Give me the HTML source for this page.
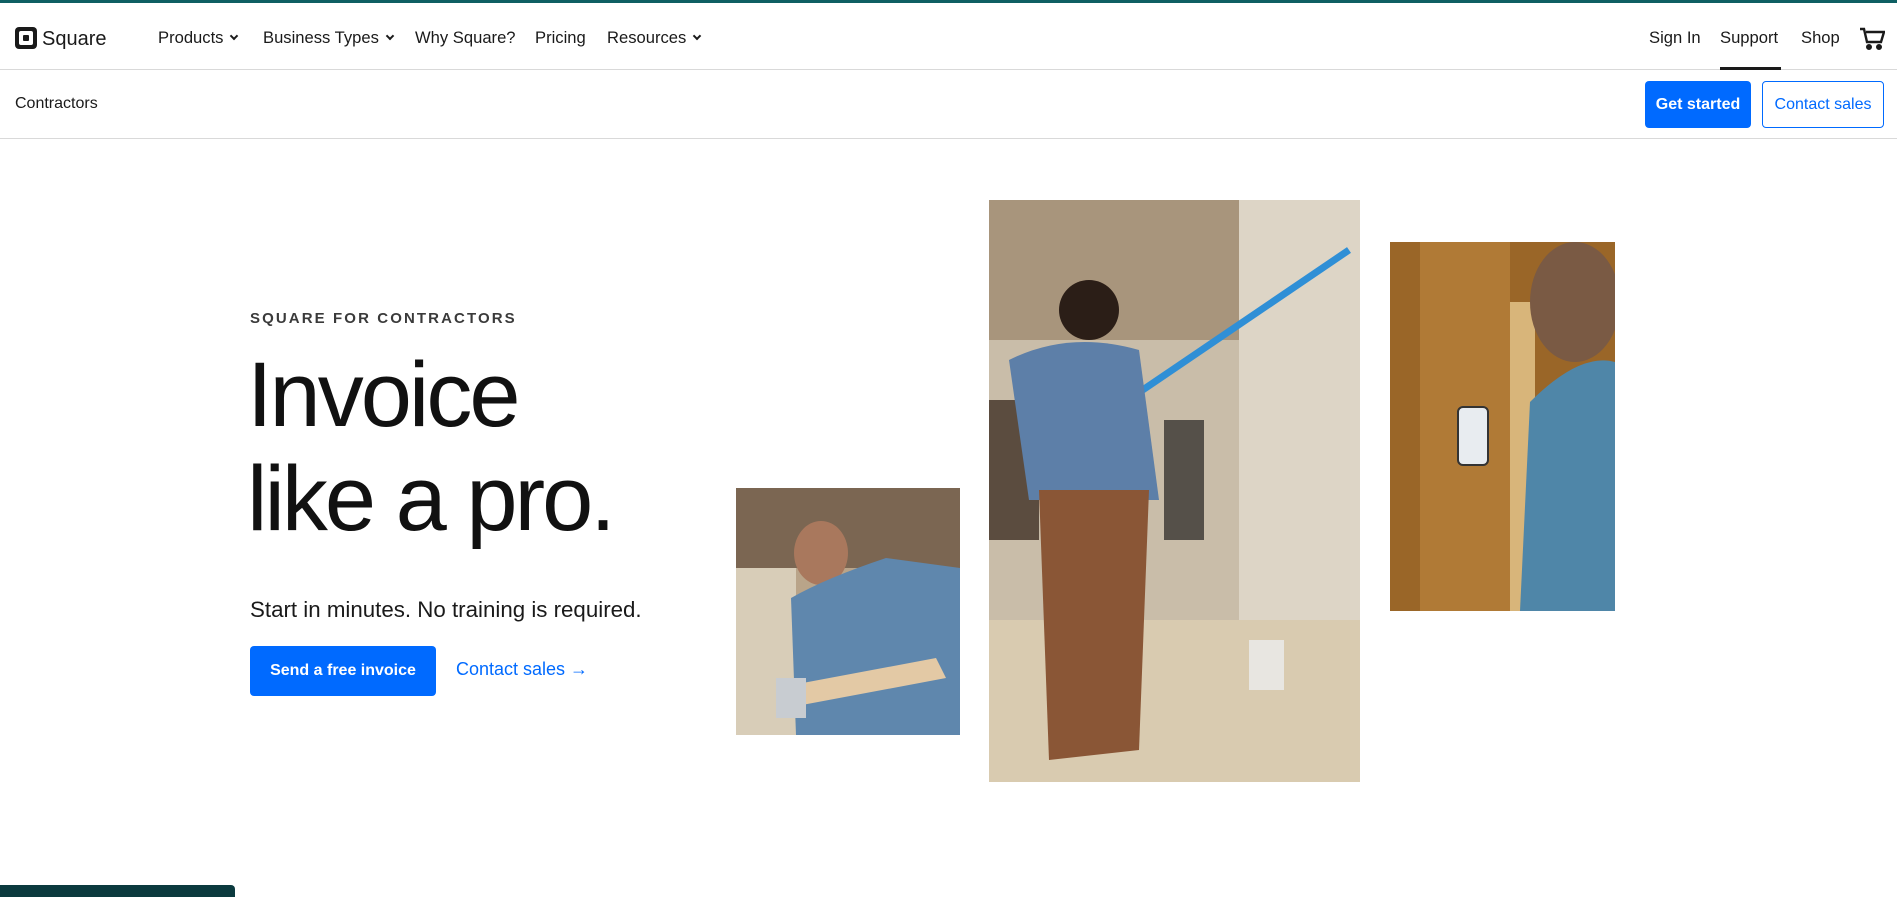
<!DOCTYPE html>
<html><head><meta charset="utf-8"><style>
*{margin:0;padding:0;box-sizing:border-box}
body{width:1897px;height:894px;overflow:hidden;background:#fff;font-family:"Liberation Sans",Arial,sans-serif;color:#1a1a1a;position:relative}
.top{position:absolute;left:0;top:0;width:100%;height:3px;background:#0e5f63}
.nav{position:absolute;top:3px;left:0;width:100%;height:67px;border-bottom:1px solid #d9d9d9}
.t{position:absolute;font-size:16.6px;color:#1a1a1a;white-space:nowrap}
.sub{position:absolute;top:71px;left:0;width:100%;height:68px;border-bottom:1px solid #d9d9d9}
.chev{display:inline-block;width:6px;height:6px;border-right:2px solid #1a1a1a;border-bottom:2px solid #1a1a1a;transform:rotate(45deg);margin-left:8px;position:relative;top:-4px}
.btn{position:absolute;border-radius:4px;font-size:16px;font-weight:bold;display:flex;align-items:center;justify-content:center}
.ph{position:absolute;overflow:hidden}
</style></head><body>
<div class="top"></div>
<div class="nav">
  <div style="position:absolute;left:15px;top:24px;width:22px;height:22px;background:#1a1a1a;border-radius:4px"><div style="position:absolute;left:4px;top:4px;width:14px;height:14px;background:#fff;border-radius:2px"></div><div style="position:absolute;left:8px;top:8px;width:6px;height:6px;background:#1a1a1a;border-radius:1px"></div></div>
  <div class="t" style="left:42px;top:25px;font-size:20px">Square</div>
  <div class="t" style="left:158px;top:25px">Products<span class="chev"></span></div>
  <div class="t" style="left:263px;top:25px">Business Types<span class="chev"></span></div>
  <div class="t" style="left:415px;top:25px">Why Square?</div>
  <div class="t" style="left:535px;top:25px">Pricing</div>
  <div class="t" style="left:607px;top:25px">Resources<span class="chev"></span></div>
  <div class="t" style="left:1649px;top:25px">Sign In</div>
  <div class="t" style="left:1720px;top:25px">Support</div>
  <div style="position:absolute;left:1720px;top:64px;width:61px;height:3px;background:#1a1a1a"></div>
  <div class="t" style="left:1801px;top:25px">Shop</div>
  <svg style="position:absolute;left:1859px;top:23px" width="26" height="26" viewBox="0 0 26 26" fill="none" stroke="#1a1a1a" stroke-width="2.4"><path d="M1 3h4l3 13h14l3-10H7"/><circle cx="10" cy="21" r="1.8" fill="#1a1a1a"/><circle cx="20" cy="21" r="1.8" fill="#1a1a1a"/></svg>
</div>
<div class="sub">
  <div class="t" style="left:15px;top:24px;font-size:16px">Contractors</div>
  <div class="btn" style="left:1645px;top:10px;width:106px;height:47px;background:#006aff;color:#fff">Get started</div>
  <div class="btn" style="left:1762px;top:10px;width:122px;height:47px;border:1px solid #006aff;color:#006aff;font-weight:normal">Contact sales</div>
</div>
<div class="t" style="left:250px;top:310px;font-size:15px;font-weight:bold;letter-spacing:2.1px;color:#3a3a3a">SQUARE FOR CONTRACTORS</div>
<div style="position:absolute;left:247px;top:343px;font-size:92px;line-height:104px;letter-spacing:-3px;color:#111">Invoice<br>like a pro.</div>
<div class="t" style="left:250px;top:597px;font-size:22.3px;color:#1a1a1a">Start in minutes. No training is required.</div>
<div class="btn" style="left:250px;top:646px;width:186px;height:50px;background:#006aff;color:#fff">Send a free invoice</div>
<div class="t" style="left:456px;top:659px;font-size:18px;color:#006aff">Contact sales →</div>

<svg class="ph" style="left:736px;top:488px" width="224" height="247" viewBox="0 0 224 247">
<rect width="224" height="247" fill="#b9a489"/><rect width="224" height="80" fill="#7b6652"/>
<rect x="0" y="80" width="60" height="167" fill="#d8cdb8"/>
<ellipse cx="85" cy="65" rx="27" ry="32" fill="#a9785d"/>
<path d="M55 110 Q90 90 150 70 L224 80 L224 247 L60 247Z" fill="#5f87ad"/>
<path d="M40 200 L200 170 L210 190 L50 220Z" fill="#e3c9a5"/>
<rect x="40" y="190" width="30" height="40" fill="#c8ccd1"/>
</svg>
<svg class="ph" style="left:989px;top:200px" width="371" height="582" viewBox="0 0 371 582">
<rect width="371" height="582" fill="#c9bda9"/><rect width="371" height="140" fill="#a8957c"/>
<path d="M250 0 L371 0 L371 582 L250 480Z" fill="#ddd5c6"/>
<rect x="0" y="420" width="371" height="162" fill="#d9cbb0"/>
<rect x="0" y="200" width="50" height="140" fill="#5b4c3f"/>
<line x1="80" y1="240" x2="360" y2="50" stroke="#2f8fd6" stroke-width="7"/>
<circle cx="100" cy="110" r="30" fill="#2b1e17"/>
<path d="M20 160 Q80 130 150 150 L170 300 L40 300Z" fill="#5d7fa8"/>
<path d="M50 290 L160 290 L150 550 L60 560Z" fill="#8a5636"/>
<rect x="175" y="220" width="40" height="120" fill="#555049"/>
<rect x="260" y="440" width="35" height="50" fill="#e8e6e1"/>
</svg>
<svg class="ph" style="left:1390px;top:242px" width="225" height="369" viewBox="0 0 225 369">
<rect width="225" height="369" fill="#9a6628"/>
<rect x="30" y="0" width="90" height="369" fill="#b07a36"/>
<rect x="120" y="60" width="25" height="309" fill="#d8b57a"/>
<ellipse cx="185" cy="60" rx="45" ry="60" fill="#7a5a44"/>
<path d="M140 160 Q190 110 225 120 L225 369 L130 369Z" fill="#4f86a8"/>
<rect x="68" y="165" width="30" height="58" rx="5" fill="#e8ecf0" stroke="#333" stroke-width="2"/>
</svg>
<div style="position:absolute;left:0;top:885px;width:235px;height:12px;background:#0b3a3e;border-radius:0 4px 0 0"></div>
</body></html>
